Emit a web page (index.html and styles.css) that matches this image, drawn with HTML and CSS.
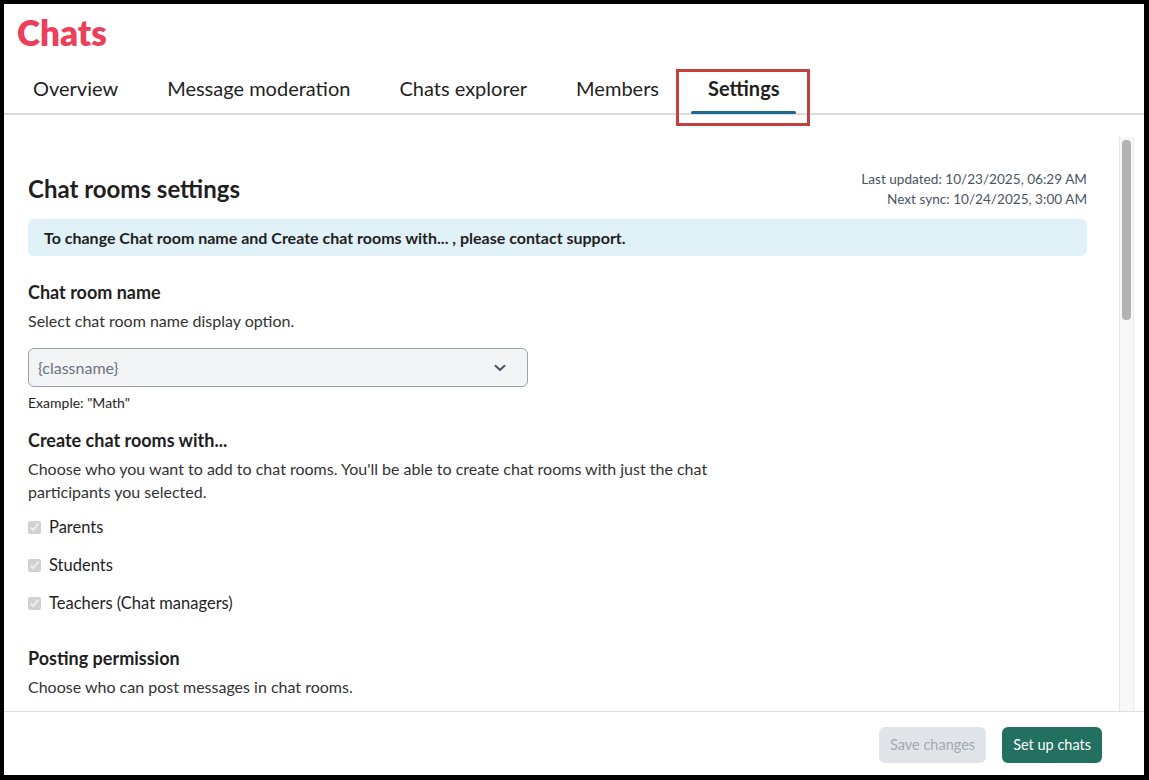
FILE: index.html
```html
<!DOCTYPE html>
<html lang="en">
<head>
    <meta charset="UTF-8">
    <meta name="viewport" content="width=device-width, initial-scale=1.0">
    <title>Chats - Settings</title>
    <link rel="stylesheet" href="styles.css">
</head>
<body>

<div class="frame">
    <header class="page-head">
        <h1>Chats</h1>
        <nav class="tabs">
            <a class="tab">Overview</a>
            <a class="tab">Message moderation</a>
            <a class="tab">Chats explorer</a>
            <a class="tab">Members</a>
            <a class="tab active">Settings</a>
        </nav>
    </header>

    <main class="content">
        <div class="panel">
            <div class="panel-head">
                <h2>Chat rooms settings</h2>
                <div class="sync-info">
                    <div>Last updated: 10/23/2025, 06:29 AM</div>
                    <div>Next sync: 10/24/2025, 3:00 AM</div>
                </div>
            </div>

            <div class="notice">To change Chat room name and Create chat rooms with... , please contact support.</div>

            <section class="field">
                <h3>Chat room name</h3>
                <p class="hint">Select chat room name display option.</p>
                <div class="select">
                    <span>{classname}</span>
                    <svg width="12" height="8" viewBox="0 0 12 8"><path d="M1.5 1.8 6 6 10.5 1.8" fill="none" stroke="#4b5563" stroke-width="2" stroke-linecap="round" stroke-linejoin="round"/></svg>
                </div>
                <p class="example">Example: "Math"</p>
            </section>

            <section class="field tight">
                <h3>Create chat rooms with...</h3>
                <p class="hint wide">Choose who you want to add to chat rooms. You'll be able to create chat rooms with just the chat participants you selected.</p>
                <div class="checks">
                    <label class="check"><input type="checkbox" checked disabled> Parents</label>
                    <label class="check"><input type="checkbox" checked disabled> Students</label>
                    <label class="check"><input type="checkbox" checked disabled> Teachers (Chat managers)</label>
                </div>
            </section>

            <section class="field">
                <h3>Posting permission</h3>
                <p class="hint">Choose who can post messages in chat rooms.</p>
            </section>
        </div>
        <div class="scrollbar"><div class="thumb"></div></div>
    </main>

    <footer class="actions">
        <button class="btn btn-disabled" disabled>Save changes</button>
        <button class="btn btn-primary">Set up chats</button>
    </footer>

    <!-- annotation box round the active tab -->
    <div class="highlight"></div>
</div>

</body>
</html>
```

FILE: styles.css
```css
* {
    box-sizing: border-box;
}
html, body {
    margin: 0;
    padding: 0;
    background-color: #000;
}
body {
    font-family: Lato, "Noto Sans", sans-serif;
    color: #1f1f1f;
}
.frame {
    position: relative;
    width: 1149px;
    height: 780px;
    border-style: solid;
    border-color: #000;
    border-width: 4px 5px 5px 4px;
    background-color: white;
    display: flex;
    flex-direction: column;
    overflow: hidden;
}
.page-head {
    border-bottom: 2px solid #dcdcdc;
}
.page-head h1 {
    margin: 0;
    padding: 8px 0 0 13px;
    height: 59px;
    font-size: 35px;
    line-height: 40px;
    font-weight: 800;
    color: #ec3f5b;
}
.tabs {
    display: flex;
    gap: 15px;
    padding-left: 12px;
}
.tab {
    padding: 0 17px;
    height: 50px;
    line-height: 50px;
    font-size: 20px;
    color: #1f1f1f;
    position: relative;
}
.tab.active {
    font-weight: 700;
}
.tab.active::after {
    content: "";
    position: absolute;
    left: 0;
    right: 0;
    bottom: -1px;
    height: 3px;
    border-radius: 2px;
    background-color: #1f6893;
}
.content {
    flex: 1;
    display: flex;
    min-height: 0;
    border-bottom: 1px solid #dde1e6;
}
.panel {
    flex: 1;
    padding: 54px 32px 0 24px;
    overflow: hidden;
}
.scrollbar {
    width: 15px;
    margin: 22px 10px 0 0;
    background-color: #f8f8f8;
    border-left: 1px solid #e6e6e6;
    border-right: 1px solid #ececec;
    padding: 3px 2px;
}
.thumb {
    height: 180px;
    border-radius: 4px;
    background-color: #b3b3b3;
}
.panel-head {
    display: flex;
    justify-content: space-between;
    align-items: center;
}
.panel-head h2 {
    margin: 0;
    font-size: 24px;
    line-height: 28px;
    font-weight: 700;
}
.sync-info {
    text-align: right;
    font-size: 13.6px;
    line-height: 20px;
    color: #4b5563;
}
.notice {
    margin-top: 10px;
    padding: 0 16px;
    height: 37px;
    line-height: 37px;
    border-radius: 6px;
    background-color: #e0f1f8;
    font-size: 16px;
    font-weight: 700;
}
.field {
    margin-top: 24px;
}
.field.tight {
    margin-top: 16px;
}
.field h3 {
    margin: 0;
    font-size: 18px;
    line-height: 24px;
    font-weight: 700;
}
.hint {
    margin: 5px 0 0;
    font-size: 16px;
    line-height: 23px;
    color: #333;
}
.hint.wide {
    max-width: 690px;
}
.select {
    margin-top: 16px;
    width: 500px;
    height: 39px;
    padding: 0 21px 0 9px;
    display: flex;
    align-items: center;
    justify-content: space-between;
    background-color: #f3f4f6;
    border: 1px solid #9ca3ad;
    border-radius: 6px;
    font-size: 16px;
    color: #6b7280;
}
.example {
    margin: 7px 0 0;
    font-size: 14px;
    line-height: 18px;
}
.checks {
    margin-top: 5px;
}
.check {
    display: flex;
    align-items: center;
    height: 38px;
    font-size: 16.5px;
}
.check input {
    width: 13px;
    height: 13px;
    margin: 0 8px 0 0;
}
.actions {
    height: 63px;
    display: flex;
    justify-content: flex-end;
    align-items: center;
    gap: 16px;
    padding: 2px 42px 0 0;
}
.btn {
    height: 36px;
    padding: 0 11px;
    border: none;
    border-radius: 6px;
    font-family: inherit;
    font-size: 14.5px;
}
.btn-disabled {
    background-color: #e1e4e9;
    color: #a2a9b3;
}
.btn-primary {
    background-color: #237060;
    color: white;
}
.highlight {
    position: absolute;
    left: 672px;
    top: 65px;
    width: 134px;
    height: 57px;
    border: 3px solid #c4403d;
}
```
